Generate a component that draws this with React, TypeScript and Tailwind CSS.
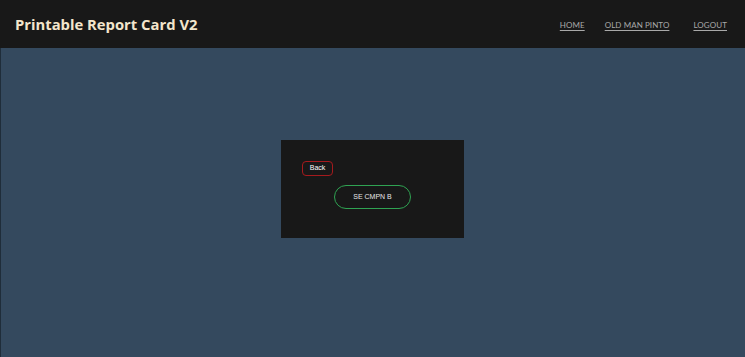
export default function App() {
  return (
    <div className="flex h-[357px] w-[745px] flex-col overflow-hidden bg-[#34495e]">
      {/* Top bar */}
      <header className="flex h-[48px] shrink-0 items-center justify-between bg-[#181818] pl-[15px] pr-[18px]">
        <h1 className="font-['Open_Sans',sans-serif] text-[14.8px] font-bold leading-none text-[#f3e6cc]">
          Printable Report Card V2
        </h1>
        <nav className="flex items-center gap-[20px] pt-[2px] font-['Lato',sans-serif] text-[8px] uppercase tracking-[0.01em] text-[#a9a9a9]">
          <a className="underline underline-offset-2">Home</a>
          <a className="underline underline-offset-2">Old Man Pinto</a>
          <a className="ml-[4px] underline underline-offset-2">Logout</a>
        </nav>
      </header>

      <main className="flex flex-1 justify-center pt-[92px] shadow-[inset_1px_0_0_#1f2d3a]">
        <div className="h-[98px] w-[183px] bg-[#181818] px-[21px] pt-[21px]">
          <button className="flex h-[15px] w-[31px] items-center justify-center rounded-[4px] border border-[#a51a1d] font-['Liberation_Sans',sans-serif] text-[7px] text-white">
            Back
          </button>
          <div className="mt-[9px] flex justify-center">
            <button className="flex h-[24px] w-[77px] items-center justify-center rounded-full border border-[#2fa352] font-['Liberation_Sans',sans-serif] text-[7px] text-[#e6e6e6]">
              SE CMPN B
            </button>
          </div>
        </div>
      </main>
    </div>
  );
}
